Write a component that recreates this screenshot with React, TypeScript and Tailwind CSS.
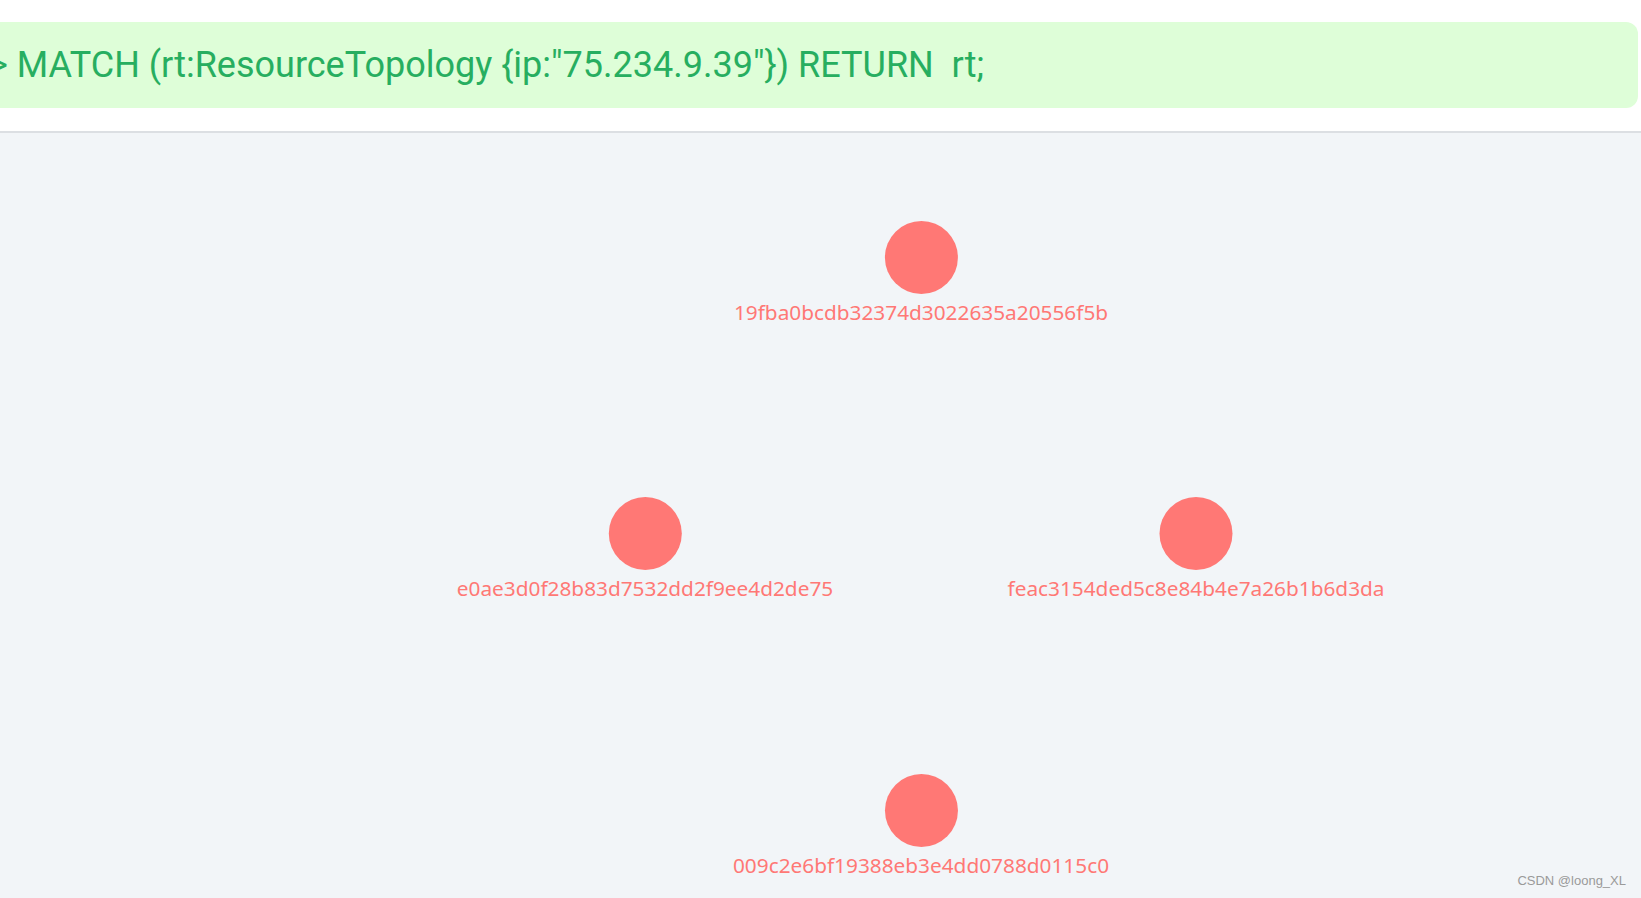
import React from "react";

type GraphNode = {
  id: string;
  x: number;
  y: number;
};

// centres measured on the canvas (canvas starts below the query bar)
const nodes: GraphNode[] = [
  { id: "19fba0bcdb32374d3022635a20556f5b", x: 921, y: 124 },
  { id: "e0ae3d0f28b83d7532dd2f9ee4d2de75", x: 645, y: 400 },
  { id: "feac3154ded5c8e84b4e7a26b1b6d3da", x: 1196, y: 400 },
  { id: "009c2e6bf19388eb3e4dd0788d0115c0", x: 921, y: 677 },
];

function Node({ node }: { node: GraphNode }) {
  return (
    <div
      className="absolute flex -translate-x-1/2 flex-col items-center"
      style={{ left: node.x, top: node.y - 36 }}
    >
      <div className="h-[73px] w-[73px] rounded-full bg-[#ff7875]" />
      <span className="mt-[4px] whitespace-nowrap font-['Noto_Sans',sans-serif] text-[20.8px] leading-[28px] text-[#ff7875]">
        {node.id}
      </span>
    </div>
  );
}

export default function App() {
  return (
    <div className="flex h-[898px] w-full flex-col overflow-hidden bg-white">
      <div className="h-[131px] shrink-0 pt-[22px]">
        <div className="-ml-[30px] mr-[3px] flex h-[86px] items-center rounded-xl bg-[#defed8] pl-[19px]">
          <span className="whitespace-pre font-['Roboto',sans-serif] text-[36px] text-[#27ae60]">
            {'> MATCH (rt:ResourceTopology {ip:"75.234.9.39"}) RETURN  rt;'}
          </span>
        </div>
      </div>
      <div className="h-[2px] shrink-0 bg-[#dcdfe3]" />
      <div className="relative flex-1 bg-[#f2f5f8]">
        {nodes.map((n) => (
          <Node key={n.id} node={n} />
        ))}
        <span className="absolute bottom-[8px] right-[15px] font-['Liberation_Sans',sans-serif] text-[13px] text-[#9a9a9a]">
          CSDN @loong_XL
        </span>
      </div>
    </div>
  );
}
